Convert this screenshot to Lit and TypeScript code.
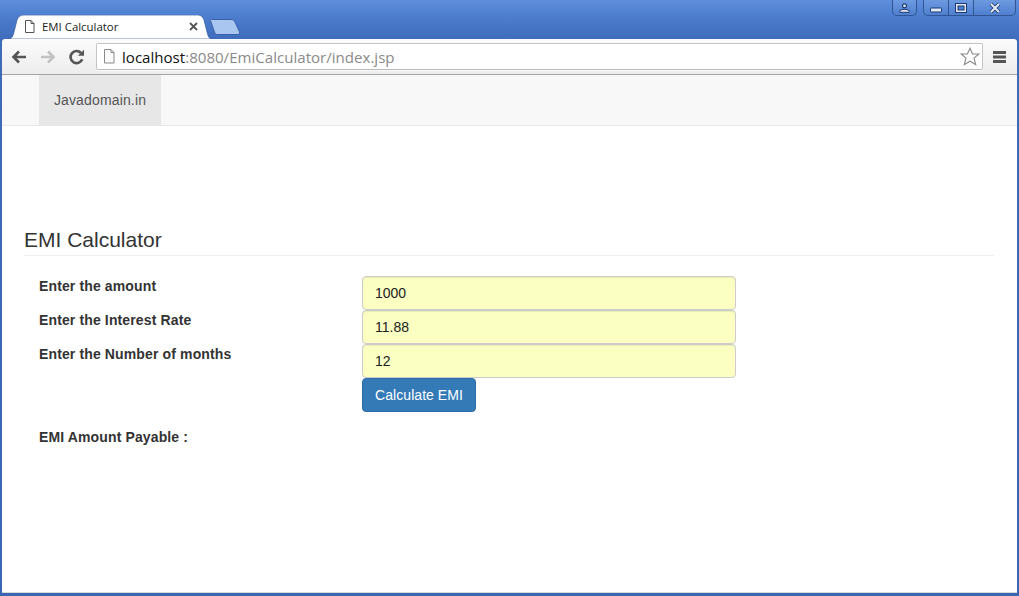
import { LitElement, html, css } from "lit";
import { customElement } from "lit/decorators.js";

@customElement("app-root")
export class AppRoot extends LitElement {
  static styles = css`
    :host { display: block; width: 1019px; height: 596px; overflow: hidden; font-family: "Liberation Sans", Arial, sans-serif; }
    .window { height: 596px; box-sizing: border-box; display: flex; flex-direction: column; background: linear-gradient(#3d6cb8, #3a66b3); padding: 0 2px 3px 2px; }
    .titlebar { height: 39px; margin: 0 -2px; flex: none; display: flex; align-items: flex-start; background: linear-gradient(#5f8fdc 0, #4f7fd0 14px, #3f6cbc 39px); }
    .tabs { display: flex; align-items: flex-end; height: 39px; padding-left: 8px; }
    .tab { position: relative; width: 204px; height: 24px; display: flex; align-items: center; }
    .tab-shape { position: absolute; left: 0; top: 0; }
    .tab-content { position: relative; display: flex; align-items: center; width: 100%; padding-left: 16px; box-sizing: border-box; font-family: "Open Sans", sans-serif; font-size: 11.4px; color: #222; margin-top: -1px; }
    .tab-title { flex: 1; margin-left: 7px; }
    .tab-close { margin-right: 14px; display: block; }
    .newtab { display: block; margin-left: -2px; margin-bottom: 4px; }
    .controls { margin-left: auto; display: flex; gap: 6px; padding-right: 3px; }
    .ctl-group { display: flex; height: 16px; box-sizing: border-box; border: 1px solid #2f5595; border-top: 0; border-radius: 0 0 5px 5px; background: linear-gradient(#6d9ae0, #4f7fd0); }
    .ctl { display: flex; align-items: center; justify-content: center; }
    .ctl + .ctl { border-left: 1px solid #2f5595; }
    .toolbar { height: 35px; flex: none; display: flex; align-items: center; background: linear-gradient(#fbfbfb, #ededed); border-bottom: 1px solid #a4a4a4; padding-left: 6px; border-radius: 3px 3px 0 0; }
    .nav-btn { width: 22px; height: 22px; display: flex; align-items: center; justify-content: center; margin-right: 7px; }
    .omnibox { flex: 1; height: 27px; margin-left: 1px; box-sizing: border-box; background: #fff; border: 1px solid #c4c4c4; border-bottom-color: #bbb; border-radius: 2px; display: flex; align-items: center; padding-left: 6px; font-family: "Open Sans", sans-serif; font-size: 15.08px; color: #8a8a8a; box-shadow: 0 1px 0 #f8f8f8; }
    .url { margin-left: 7px; flex: 1; }
    .host { color: #111; }
    .star { margin-right: 2px; display: block; }
    .menu { width: 32px; padding-right: 2px; display: flex; justify-content: center; }
    .page { flex: 1; background: #fff; min-height: 0; box-shadow: inset 0 -1px 0 #d8d8d8; }
    .navbar { height: 51px; box-sizing: border-box; background: #f8f8f8; border-bottom: 1px solid #e7e7e7; padding-left: 37px; display: flex; }
    .brand { width: 122px; display: flex; align-items: center; justify-content: center; background: #e7e7e7; color: #555; font-size: 14px; letter-spacing: 0.15px; }
    .content { padding: 102px 23px 0 22px; }
    h1 { margin: 0; font-weight: 400; font-size: 21px; line-height: 24px; color: #333; border-bottom: 1px solid #eee; height: 26px; padding-bottom: 1px; }
    .form { display: grid; grid-template-columns: 323px 374px; grid-auto-rows: 34px; padding: 20px 0 0 15px; }
    label { font-weight: 700; font-size: 14px; line-height: 20px; color: #333; letter-spacing: 0.13px; }
    .field { box-sizing: border-box; height: 34px; background: #fbffc2; border: 1px solid #ccc; border-radius: 4px; box-shadow: inset 0 1px 1px rgba(0,0,0,.075); padding: 6px 12px; font-size: 14px; line-height: 20px; color: #222; font-family: inherit; width: 100%; display: block; outline: none; }
    button { box-sizing: border-box; grid-column: 2; justify-self: start; height: 34px; width: 114px; background: #337ab7; border: 1px solid #2e6da4; border-radius: 4px; color: #fff; font: 14px "Liberation Sans", Arial, sans-serif; letter-spacing: 0.05px; padding: 0; }
    .result { grid-column: 1 / span 2; margin-top: 15px; }
  `;

  render() {
    return html`<div class="window">
      <div class="titlebar">
        <div class="tabs">
          <div class="tab">
            <svg class="tab-shape" width="204" height="24" viewBox="0 0 204 24"><path d="M0 24 C4 24 5 21 6 17 L9 5 C10 2 12 0 16 0 L190 0 C193 0 195 2 196 5 L199 17 C200 21 201 24 204 24 Z" fill="#fff" stroke="#2f5a9e" stroke-width="0.7"/></svg>
            <div class="tab-content">
              <svg width="11" height="13" viewBox="0 0 11 13"><path d="M1.5 .5H7L10 3.5V12.5H1.5Z M7 .5V3.5H10" fill="#fff" stroke="#555"/></svg>
              <span class="tab-title">EMI Calculator</span>
              <svg class="tab-close" width="9" height="9" viewBox="0 0 9 9"><path d="M1 1L8 8M8 1L1 8" stroke="#555" stroke-width="1.8"/></svg>
            </div>
          </div>
          <svg class="newtab" width="30" height="16" viewBox="0 0 30 16"><path d="M.5 1.5 C.5 .8 1 .5 1.5 .5 L21 .5 C23 .5 24 1.5 25 3 L29.5 13 C30 14.5 29 15.5 28 15.5 L8 15.5 C6 15.5 5 15 4.5 13 Z" fill="#a9c6f0" stroke="#3b62a8"/></svg>
        </div>
        <div class="controls">
          <div class="ctl-group"><div class="ctl" style="width:23px">
            <svg width="11" height="10" viewBox="0 0 11 10"><circle cx="5.5" cy="2.8" r="2" fill="#dfe8f8" stroke="#1f3a6e" stroke-width="1.2"/><path d="M.8 9.3V7.6C2.5 6 8.5 6 10.2 7.6V9.3Z" fill="#dfe8f8" stroke="#1f3a6e"/></svg>
          </div></div>
          <div class="ctl-group">
            <div class="ctl" style="width:24px"><svg width="12" height="6" viewBox="0 0 12 6" style="margin-top:5px"><rect x=".5" y="1" width="11" height="4" rx="1" fill="#dfe8f8" stroke="#1f3a6e"/></svg></div>
            <div class="ctl" style="width:24px"><svg width="12" height="10" viewBox="0 0 12 10"><rect x=".5" y=".5" width="11" height="9" fill="#dfe8f8" stroke="#1f3a6e"/><rect x="3" y="3" width="6" height="4" fill="#4f7fd0" stroke="#1f3a6e"/></svg></div>
            <div class="ctl" style="width:41px"><svg width="12" height="10" viewBox="0 0 12 10"><path d="M2 1L10 9M10 1L2 9" stroke="#1f3a6e" stroke-width="3.6"/><path d="M2 1L10 9M10 1L2 9" stroke="#e8eefa" stroke-width="1.9"/></svg></div>
          </div>
        </div>
      </div>
      <div class="toolbar">
        <div class="nav-btn"><svg width="16" height="14" viewBox="0 0 16 14"><path d="M15 7H3M8 1.5L2.5 7L8 12.5" fill="none" stroke="#555" stroke-width="2.6"/></svg></div>
        <div class="nav-btn"><svg width="16" height="14" viewBox="0 0 16 14"><path d="M1 7H13M8 1.5L13.5 7L8 12.5" fill="none" stroke="#c2c2c2" stroke-width="2.6"/></svg></div>
        <div class="nav-btn"><svg width="16" height="16" viewBox="0 0 16 16"><path d="M13.2 10.2A6 6 0 1 1 12 4" fill="none" stroke="#555" stroke-width="2.6"/><path d="M9 6.8H15V.8Z" fill="#555"/></svg></div>
        <div class="omnibox">
          <svg width="12" height="15" viewBox="0 0 12 15"><path d="M1.5 .5H8L11 3.5V14H1.5Z M8 .5V3.5H11" fill="#fafafa" stroke="#8a8a8a"/></svg>
          <span class="url"><span class="host">localhost</span>:8080/EmiCalculator/index.jsp</span>
          <svg class="star" width="20" height="19" viewBox="0 0 20 19"><path d="M10 1.2L12.6 7H18.8L14 11.2L15.7 17.6L10 14.2L4.3 17.6L6 11.2L1.2 7H7.4Z" fill="#fff" stroke="#888" stroke-width="1.1"/></svg>
        </div>
        <div class="menu"><svg width="13" height="12" viewBox="0 0 13 12"><path d="M0 0H13V3H0ZM0 4.5H13V7.5H0ZM0 9H13V12H0Z" fill="#555"/></svg></div>
      </div>
      <div class="page">
        <div class="navbar"><div class="brand">Javadomain.in</div></div>
        <div class="content">
          <h1>EMI Calculator</h1>
          <div class="form">
            <label>Enter the amount</label><input class="field" .value=${"1000"} />
            <label>Enter the Interest Rate</label><input class="field" .value=${"11.88"} />
            <label>Enter the Number of months</label><input class="field" .value=${"12"} />
            <button>Calculate EMI</button>
            <label class="result">EMI Amount Payable :</label>
          </div>
        </div>
      </div>
    </div>`;
  }
}
